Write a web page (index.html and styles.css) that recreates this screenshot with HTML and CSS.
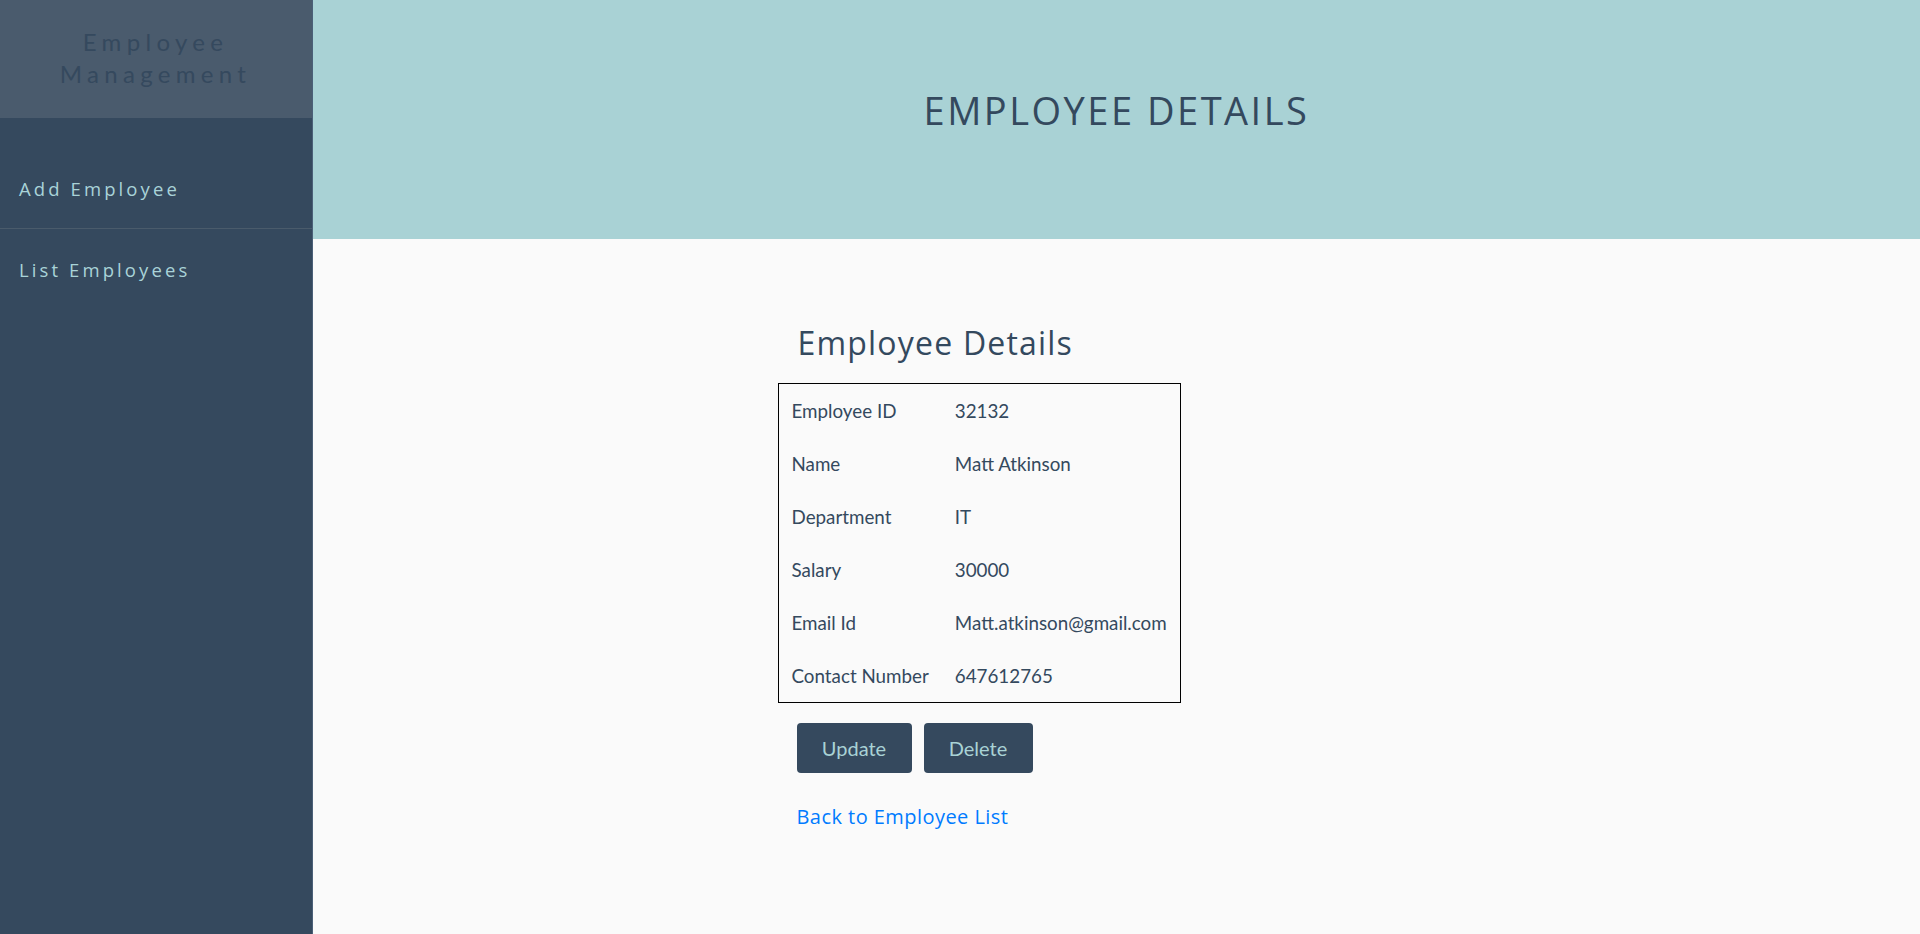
FILE: index.html
```html
<!DOCTYPE html>
<html lang="en">
<head>
<meta charset="utf-8">
<title>Employee Details</title>
<link rel="stylesheet" href="styles.css">
</head>
<body>
<div class="app">
  <aside class="sidebar">
    <div class="brand">Employee<br>Management</div>
    <nav class="nav">
      <a class="nav-item first" href="#">Add Employee</a>
      <a class="nav-item" href="#">List Employees</a>
    </nav>
  </aside>
  <main class="main">
    <header class="banner">
      <h1 class="banner-title">EMPLOYEE DETAILS</h1>
    </header>
    <section class="content">
      <h2 class="section-title">Employee Details</h2>
      <table class="details">
        <tr><td class="label">Employee ID</td><td>32132</td></tr>
        <tr><td class="label">Name</td><td>Matt Atkinson</td></tr>
        <tr><td class="label">Department</td><td>IT</td></tr>
        <tr><td class="label">Salary</td><td>30000</td></tr>
        <tr><td class="label">Email Id</td><td>Matt.atkinson@gmail.com</td></tr>
        <tr><td class="label">Contact Number</td><td>647612765</td></tr>
      </table>
      <div class="actions">
        <button class="btn btn-update" type="button">Update</button>
        <button class="btn btn-delete" type="button">Delete</button>
      </div>
      <a class="back-link" href="#">Back to Employee List</a>
    </section>
  </main>
</div>
</body>
</html>
```
FILE: styles.css
```css
* { box-sizing: border-box; }
html, body { margin: 0; padding: 0; height: 100%; }
body {
  font-family: Lato, "Liberation Sans", sans-serif;
  background: #fafafa;
  color: #34495e;
}
.app {
  display: flex;
  min-height: 934px;
}
.sidebar {
  width: 313px;
  flex: 0 0 313px;
  background: #35495e;
  border-right: 1px solid #4b6078;
  display: flex;
  flex-direction: column;
}
.brand {
  height: 118px;
  background: #4a5b6d;
  color: #35495e;
  font-family: Lato, sans-serif;
  font-size: 24px;
  line-height: 32px;
  letter-spacing: 5.3px;
  text-align: center;
  padding-top: 26px;
  padding-right: 1px;
}
.nav {
  display: flex;
  flex-direction: column;
  padding-top: 31px;
}
.nav-item {
  height: 80px;
  display: flex;
  align-items: center;
  padding-left: 19px;
  color: #a9d3d8;
  text-decoration: none;
  font-family: "Open Sans", sans-serif;
  font-size: 18.5px;
  letter-spacing: 3.1px;
}
.nav-item.first {
  border-bottom: 1px solid #4a5b6b;
}
.main {
  flex: 1;
  display: flex;
  flex-direction: column;
}
.banner {
  height: 239px;
  background: #a9d2d5;
  display: flex;
  justify-content: center;
  padding-top: 91px;
}
.banner-title {
  margin: 0;
  font-family: "Open Sans", sans-serif;
  font-weight: 400;
  font-size: 38px;
  line-height: 38px;
  height: 38px;
  letter-spacing: 2.5px;
  color: #34495e;
}
.content {
  width: 678px;
  margin: 0 auto;
  padding-top: 84px;
}
.section-title {
  margin: 0 0 20px 20px;
  font-family: "Open Sans", sans-serif;
  font-weight: 400;
  font-size: 32px;
  line-height: 40px;
  letter-spacing: 1.2px;
  color: #34495e;
}
.details {
  border-collapse: collapse;
  border: 1px solid #000;
  font-size: 18.8px;
  color: #34495e;
}
.details td {
  padding: 14px 13px;
  line-height: 25px;
  vertical-align: middle;
  white-space: nowrap;
}
.actions {
  display: flex;
  gap: 12px;
  margin: 20px 0 0 19px;
}
.btn {
  height: 50px;
  border: none;
  border-radius: 4px;
  background: #35495e;
  color: #a9d2d5;
  font-family: Lato, sans-serif;
  font-size: 20px;
  cursor: pointer;
}
.btn-update { width: 115px; }
.btn-delete { width: 109px; }
.back-link {
  display: inline-block;
  margin: 31px 0 0 19px;
  color: #007bff;
  text-decoration: none;
  font-family: "Open Sans", sans-serif;
  font-size: 20px;
  line-height: 26px;
  letter-spacing: 0.45px;
}
```
